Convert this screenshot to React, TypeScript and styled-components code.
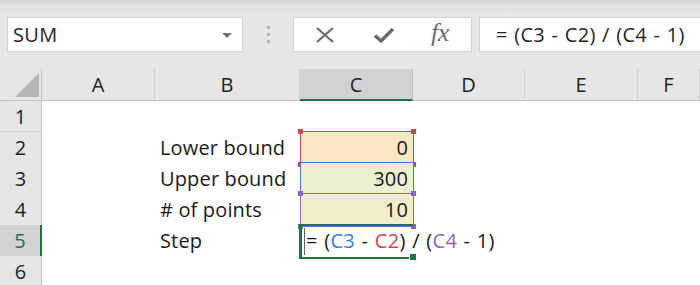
import React from "react";
import styled, { createGlobalStyle } from "styled-components";

const GlobalStyle = createGlobalStyle`
  html, body {
    margin: 0;
    padding: 0;
    background: #ffffff;
    overflow: hidden;
  }
  body {
    font-family: "Open Sans", "Noto Sans", sans-serif;
    color: #1f1f1f;
  }
`;

const colors = {
  chrome: "#e6e6e6",
  headerLine: "#c4c4c4",
  selectedHeader: "#d2d2d2",
  green: "#217346",
  icon: "#6b6b6b",
  red: "#d4464b",
  blue: "#3d7be0",
  purple: "#8e62cd",
};

const Page = styled.div`
  width: 700px;
  height: 285px;
  display: flex;
  flex-direction: column;
  overflow: hidden;
`;

/* ---------- formula bar ---------- */

const Toolbar = styled.div`
  height: 69px;
  flex: none;
  display: flex;
  align-items: flex-start;
  padding: 17px 0 0 7px;
  box-sizing: border-box;
  background: linear-gradient(#d3d3d3 0px, #e2e2e2 7px, ${colors.chrome} 14px);
`;

const Field = styled.div`
  height: 35px;
  box-sizing: border-box;
  background: #ffffff;
  border: 1px solid #d4d4d4;
  display: flex;
  align-items: center;
  font-size: 20px;
  color: #262626;
`;

const NameBox = styled(Field)`
  width: 236px;
  padding: 0 10px 0 5px;
  justify-content: space-between;
  letter-spacing: 0.3px;
`;

const Caret = styled.span`
  width: 0;
  height: 0;
  border-left: 5px solid transparent;
  border-right: 5px solid transparent;
  border-top: 5px solid #767676;
  margin-top: 2px;
`;

const Grip = styled.div`
  width: 50px;
  height: 35px;
  display: flex;
  flex-direction: column;
  align-items: center;
  justify-content: center;
  gap: 4px;
`;

const GripDot = styled.span`
  width: 3px;
  height: 3px;
  background: #b3b3b3;
`;

const ButtonBox = styled(Field)`
  width: 179px;
  padding-left: 21px;
`;

const IconSlot = styled.span<{ $w: number }>`
  width: ${(p) => p.$w}px;
  height: 33px;
  display: flex;
  align-items: center;
`;

const Fx = styled.span`
  font-family: "Liberation Serif", "DejaVu Serif", serif;
  font-style: italic;
  font-size: 26px;
  color: ${colors.icon};
  letter-spacing: -0.5px;
  margin-top: -3px;
`;

const FormulaText = `
  letter-spacing: 0.3px;
  word-spacing: 1px;
`;

const FormulaBox = styled(Field)`
  flex: 1;
  margin-left: 7px;
  border-right: none;
  padding-left: 16px;
  ${FormulaText}
`;

/* ---------- sheet ---------- */

const COLS = "42px 113px 145px 113px 112px 113px 1fr";

const HeaderRow = styled.div`
  height: 32px;
  flex: none;
  display: grid;
  grid-template-columns: ${COLS};
  background: ${colors.chrome};
`;

const Corner = styled.div`
  border-right: 1px solid ${colors.headerLine};
  border-bottom: 1px solid ${colors.headerLine};
  box-sizing: border-box;
  display: flex;
  align-items: flex-end;
  justify-content: flex-end;
  padding: 0 2px 3px 0;
`;

const CornerTriangle = styled.span`
  width: 0;
  height: 0;
  border-left: 24px solid transparent;
  border-bottom: 24px solid #b5b5b5;
`;

const ColHead = styled.div<{ $selected?: boolean }>`
  box-sizing: border-box;
  display: flex;
  align-items: center;
  justify-content: center;
  font-size: 20px;
  color: #222;
  background: ${(p) => (p.$selected ? colors.selectedHeader : colors.chrome)};
  border-right: 1px solid ${(p) => (p.$selected ? "#bdbdbd" : "#d0d0d0")};
  border-bottom: ${(p) =>
    p.$selected ? `2px solid ${colors.green}` : `1px solid ${colors.headerLine}`};
  padding-top: ${(p) => (p.$selected ? "1px" : "0")};
`;

const Row = styled.div`
  height: 31px;
  flex: none;
  display: grid;
  grid-template-columns: ${COLS};
`;

const RowHead = styled.div<{ $selected?: boolean }>`
  box-sizing: border-box;
  display: flex;
  align-items: center;
  justify-content: center;
  font-size: 20px;
  color: ${(p) => (p.$selected ? colors.green : "#222")};
  background: ${(p) => (p.$selected ? colors.selectedHeader : colors.chrome)};
  border-bottom: 1px solid #d0d0d0;
  border-right: ${(p) =>
    p.$selected ? `2px solid ${colors.green}` : `1px solid ${colors.headerLine}`};
`;

const Cell = styled.div<{ $align?: "left" | "right"; $fill?: string }>`
  position: relative;
  box-sizing: border-box;
  display: flex;
  align-items: center;
  justify-content: ${(p) => (p.$align === "right" ? "flex-end" : "flex-start")};
  padding: 0 5px 1px 5px;
  font-size: 20px;
  line-height: 31px;
  color: #1a1a1a;
  white-space: nowrap;
  letter-spacing: 0.15px;
  background: ${(p) => p.$fill || "transparent"};
`;

/* range outline drawn over the cell */
const RefFrame = styled.div<{ $color: string }>`
  position: absolute;
  left: 0;
  right: -1px;
  top: -1px;
  bottom: -1px;
  border: 1px solid ${(p) => p.$color};
  pointer-events: none;
`;

const Handle = styled.span<{ $color: string; $pos: string }>`
  position: absolute;
  width: 5px;
  height: 5px;
  background: ${(p) => p.$color};
  ${(p) => p.$pos}
`;

const ActiveFrame = styled.div`
  position: absolute;
  left: -1px;
  right: 0;
  top: -1px;
  bottom: -2px;
  border-left: 3px solid ${colors.green};
  border-top: 2px solid ${colors.green};
  border-bottom: 2px solid ${colors.green};
  pointer-events: none;
`;

const FillHandle = styled.span`
  position: absolute;
  right: -4px;
  bottom: -4px;
  width: 6px;
  height: 6px;
  background: ${colors.green};
  border: 1px solid #fff;
`;

const TextCursor = styled.span`
  position: absolute;
  left: 4px;
  top: 3px;
  width: 1px;
  height: 27px;
  background: #666;
`;

const EditText = styled.span`
  padding-left: 1px;
  z-index: 1;
  ${FormulaText}
`;

const Ref = styled.span<{ $color: string }>`
  color: ${(p) => p.$color};
`;

const corners = [
  "left: -3px; top: -3px;",
  "right: -3px; top: -3px;",
  "left: -3px; bottom: -3px;",
  "right: -3px; bottom: -3px;",
];

const Formula: React.FC = () => (
  <>
    = (<Ref $color={colors.blue}>C3</Ref> - <Ref $color={colors.red}>C2</Ref>) / (
    <Ref $color={colors.purple}>C4</Ref> - 1)
  </>
);

interface RefCellProps {
  value: string;
  fill: string;
  color: string;
  handles?: boolean;
}

const RefCell: React.FC<RefCellProps> = ({ value, fill, color, handles }) => (
  <Cell $align="right" $fill={fill}>
    {value}
    <RefFrame $color={color}>
      {handles && corners.map((c) => <Handle key={c} $color={color} $pos={c} />)}
    </RefFrame>
  </Cell>
);

const rows = [
  { n: 1, label: "", value: null },
  { n: 2, label: "Lower bound", value: { v: "0", fill: "#f9e8c3", color: colors.red, handles: true } },
  { n: 3, label: "Upper bound", value: { v: "300", fill: "#ebf0d1", color: colors.blue, handles: false } },
  { n: 4, label: "# of points", value: { v: "10", fill: "#f4edc9", color: colors.purple, handles: true } },
];

export default function App() {
  return (
    <Page>
      <GlobalStyle />
      <Toolbar>
        <NameBox>
          SUM
          <Caret />
        </NameBox>
        <Grip>
          <GripDot />
          <GripDot />
          <GripDot />
        </Grip>
        <ButtonBox>
          <IconSlot $w={58}>
            <svg width="20" height="16" viewBox="0 0 20 16">
              <path d="M2 1 L18 15 M18 1 L2 15" stroke={colors.icon} strokeWidth="2.2" fill="none" />
            </svg>
          </IconSlot>
          <IconSlot $w={58}>
            <svg width="22" height="16" viewBox="0 0 22 16">
              <path d="M2 8.5 L8 14 L20 2" stroke={colors.icon} strokeWidth="3.4" fill="none" />
            </svg>
          </IconSlot>
          <IconSlot $w={40}>
            <Fx>fx</Fx>
          </IconSlot>
        </ButtonBox>
        <FormulaBox>= (C3 - C2) / (C4 - 1)</FormulaBox>
      </Toolbar>

      <HeaderRow>
        <Corner>
          <CornerTriangle />
        </Corner>
        <ColHead>A</ColHead>
        <ColHead>B</ColHead>
        <ColHead $selected>C</ColHead>
        <ColHead>D</ColHead>
        <ColHead>E</ColHead>
        <ColHead>F</ColHead>
      </HeaderRow>

      {rows.map((r) => (
        <Row key={r.n}>
          <RowHead>{r.n}</RowHead>
          <Cell />
          <Cell>{r.label}</Cell>
          {r.value ? (
            <RefCell value={r.value.v} fill={r.value.fill} color={r.value.color} handles={r.value.handles} />
          ) : (
            <Cell />
          )}
          <Cell />
          <Cell />
          <Cell />
        </Row>
      ))}

      <Row>
        <RowHead $selected>5</RowHead>
        <Cell />
        <Cell>Step</Cell>
        <Cell>
          <ActiveFrame>
            <FillHandle />
          </ActiveFrame>
          <TextCursor />
          <EditText>
            <Formula />
          </EditText>
        </Cell>
        <Cell />
        <Cell />
        <Cell />
      </Row>

      <Row>
        <RowHead>6</RowHead>
        <Cell />
        <Cell />
        <Cell />
        <Cell />
        <Cell />
        <Cell />
      </Row>
    </Page>
  );
}
